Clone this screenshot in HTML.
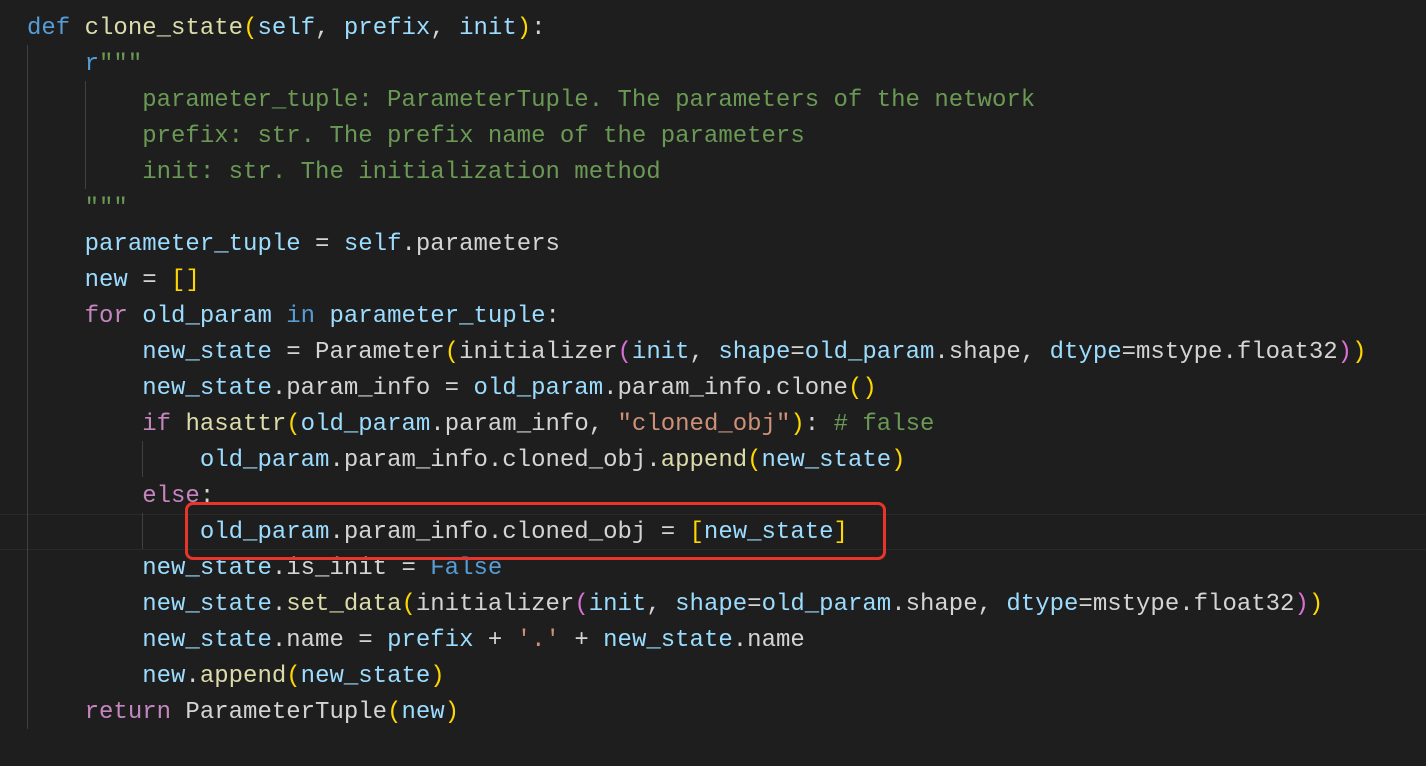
<!DOCTYPE html>
<html><head><meta charset="utf-8"><style>
html,body{margin:0;padding:0;background:#1e1e1e;}
body{width:1426px;height:766px;position:relative;overflow:hidden;font-family:"Liberation Mono","DejaVu Sans Mono",monospace;font-size:24px;color:#d4d4d4;}
.l{position:absolute;left:27px;height:36px;line-height:36px;white-space:pre;}
.k{color:#569cd6}.f{color:#dcdcaa}.v{color:#9cdcfe}.s{color:#ce9178}.c{color:#6a9955}.p{color:#c586c0}.y{color:#ffd700}.o{color:#da70d6}
.g{position:absolute;width:1px;background:#404040;}
</style></head><body>
<div style="position:absolute;left:0;top:514px;width:1426px;height:34px;border-top:1px solid #2a2a2a;border-bottom:1px solid #2a2a2a;"></div>
<div class="g" style="left:27px;top:45px;height:684px"></div>
<div class="g" style="left:85px;top:81px;height:108px"></div>
<div class="g" style="left:142px;top:441px;height:36px"></div>
<div class="g" style="left:142px;top:513px;height:36px"></div>
<div class="l" style="top:11px"><span class="k">def</span> <span class="f">clone_state</span><span class="y">(</span><span class="v">self</span>, <span class="v">prefix</span>, <span class="v">init</span><span class="y">)</span>:</div>
<div class="l" style="top:47px">    <span class="k">r</span><span class="c">"""</span></div>
<div class="l c" style="top:83px">        parameter_tuple: ParameterTuple. The parameters of the network</div>
<div class="l c" style="top:119px">        prefix: str. The prefix name of the parameters</div>
<div class="l c" style="top:155px">        init: str. The initialization method</div>
<div class="l c" style="top:191px">    """</div>
<div class="l" style="top:227px">    <span class="v">parameter_tuple</span> = <span class="v">self</span>.parameters</div>
<div class="l" style="top:263px">    <span class="v">new</span> = <span class="y">[]</span></div>
<div class="l" style="top:299px">    <span class="p">for</span> <span class="v">old_param</span> <span class="k">in</span> <span class="v">parameter_tuple</span>:</div>
<div class="l" style="top:335px">        <span class="v">new_state</span> = Parameter<span class="y">(</span>initializer<span class="o">(</span><span class="v">init</span>, <span class="v">shape</span>=<span class="v">old_param</span>.shape, <span class="v">dtype</span>=mstype.float32<span class="o">)</span><span class="y">)</span></div>
<div class="l" style="top:371px">        <span class="v">new_state</span>.param_info = <span class="v">old_param</span>.param_info.clone<span class="y">()</span></div>
<div class="l" style="top:407px">        <span class="p">if</span> <span class="f">hasattr</span><span class="y">(</span><span class="v">old_param</span>.param_info, <span class="s">"cloned_obj"</span><span class="y">)</span>: <span class="c"># false</span></div>
<div class="l" style="top:443px">            <span class="v">old_param</span>.param_info.cloned_obj.<span class="f">append</span><span class="y">(</span><span class="v">new_state</span><span class="y">)</span></div>
<div class="l" style="top:479px">        <span class="p">else</span>:</div>
<div class="l" style="top:515px">            <span class="v">old_param</span>.param_info.cloned_obj = <span class="y">[</span><span class="v">new_state</span><span class="y">]</span></div>
<div class="l" style="top:551px">        <span class="v">new_state</span>.is_init = <span class="k">False</span></div>
<div class="l" style="top:587px">        <span class="v">new_state</span>.<span class="f">set_data</span><span class="y">(</span>initializer<span class="o">(</span><span class="v">init</span>, <span class="v">shape</span>=<span class="v">old_param</span>.shape, <span class="v">dtype</span>=mstype.float32<span class="o">)</span><span class="y">)</span></div>
<div class="l" style="top:623px">        <span class="v">new_state</span>.name = <span class="v">prefix</span> + <span class="s">'.'</span> + <span class="v">new_state</span>.name</div>
<div class="l" style="top:659px">        <span class="v">new</span>.<span class="f">append</span><span class="y">(</span><span class="v">new_state</span><span class="y">)</span></div>
<div class="l" style="top:695px">    <span class="p">return</span> ParameterTuple<span class="y">(</span><span class="v">new</span><span class="y">)</span></div>
<div style="position:absolute;left:185px;top:502px;width:695px;height:52px;border:3px solid #e8352b;border-radius:8px;"></div>
</body></html>
